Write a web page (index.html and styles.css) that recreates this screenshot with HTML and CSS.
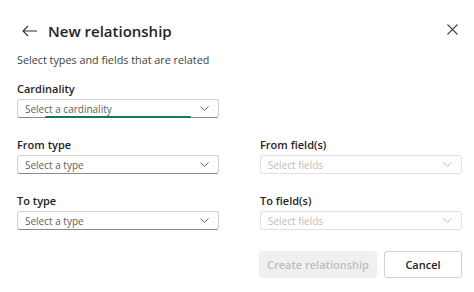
FILE: index.html
```html
<!DOCTYPE html>
<html lang="en">
<head>
    <meta charset="UTF-8">
    <title>New relationship</title>
    <link rel="stylesheet" href="styles.css">
</head>
<body>
    <div class="panel">
        <div class="header">
            <button class="icon-btn back" aria-label="Back">
                <svg width="16" height="12" viewBox="0 0 16 12"><path d="M6 1 L1 6 L6 11 M1 6 H15" fill="none" stroke="#333" stroke-width="1.1"/></svg>
            </button>
            <h1>New relationship</h1>
            <button class="icon-btn close" aria-label="Close">
                <svg width="11" height="11" viewBox="0 0 11 11"><path d="M0.5 0.5 L10.5 10.5 M10.5 0.5 L0.5 10.5" fill="none" stroke="#444" stroke-width="1.1"/></svg>
            </button>
        </div>
        <p class="subtitle">Select types and fields that are related</p>

        <div class="field cardinality">
            <label>Cardinality</label>
            <div class="dropdown focused">
                <span>Select a cardinality</span>
                <svg class="chev" width="9" height="5" viewBox="0 0 9 5"><path d="M0.5 0.5 L4.5 4.5 L8.5 0.5" fill="none" stroke="#666"/></svg>
            </div>
        </div>

        <div class="grid">
            <div class="field">
                <label>From type</label>
                <div class="dropdown">
                    <span>Select a type</span>
                    <svg class="chev" width="9" height="5" viewBox="0 0 9 5"><path d="M0.5 0.5 L4.5 4.5 L8.5 0.5" fill="none" stroke="#666"/></svg>
                </div>
            </div>
            <div class="field">
                <label>From field(s)</label>
                <div class="dropdown disabled">
                    <span>Select fields</span>
                    <svg class="chev" width="9" height="5" viewBox="0 0 9 5"><path d="M0.5 0.5 L4.5 4.5 L8.5 0.5" fill="none" stroke="#bbb"/></svg>
                </div>
            </div>
            <div class="field">
                <label>To type</label>
                <div class="dropdown">
                    <span>Select a type</span>
                    <svg class="chev" width="9" height="5" viewBox="0 0 9 5"><path d="M0.5 0.5 L4.5 4.5 L8.5 0.5" fill="none" stroke="#666"/></svg>
                </div>
            </div>
            <div class="field">
                <label>To field(s)</label>
                <div class="dropdown disabled">
                    <span>Select fields</span>
                    <svg class="chev" width="9" height="5" viewBox="0 0 9 5"><path d="M0.5 0.5 L4.5 4.5 L8.5 0.5" fill="none" stroke="#bbb"/></svg>
                </div>
            </div>
        </div>

        <div class="actions">
            <button class="btn primary" disabled>Create relationship</button>
            <button class="btn">Cancel</button>
        </div>
    </div>
</body>
</html>
```

FILE: styles.css
```css
body {
    margin: 0;
    background: #fff;
    font-family: "Open Sans", "Noto Sans", sans-serif;
    color: #242424;
}
.panel {
    width: 474px;
    height: 292px;
    padding: 0 12px 0 17px;
    box-sizing: border-box;
}
.header {
    display: flex;
    align-items: center;
    height: 30px;
    padding-top: 16px;
}
.icon-btn {
    background: none;
    border: none;
    padding: 0;
    display: flex;
    cursor: pointer;
}
.back {
    margin-left: 5px;
    margin-right: 10px;
}
.close {
    margin-left: auto;
    margin-right: 4px;
    margin-top: -3px;
}
h1 {
    margin: 0;
    font-size: 15px;
    font-weight: 600;
}
.subtitle {
    margin: 6px 0 0;
    font-size: 10.8px;
    line-height: 15px;
    color: #424242;
}
.field label {
    display: block;
    font-size: 11px;
    line-height: 15px;
    font-weight: 600;
    margin-bottom: 3px;
}
.cardinality {
    margin-top: 14px;
    width: 202px;
}
.dropdown {
    position: relative;
    height: 17px;
    border: 1px solid #d1d1d1;
    border-bottom-color: #8a8a8a;
    border-radius: 3px;
    display: flex;
    align-items: center;
    justify-content: space-between;
    padding: 0 9px 0 7px;
    font-size: 10px;
    color: #616161;
}
.dropdown.focused::after {
    content: "";
    position: absolute;
    left: 27px;
    right: 27px;
    bottom: -1px;
    height: 2px;
    background: #0f7b5a;
    border-radius: 1px;
}
.dropdown.disabled {
    border-color: #e0e0e0;
    color: #bdbdbd;
}
.grid {
    display: grid;
    grid-template-columns: 202px 202px;
    column-gap: 41px;
    row-gap: 19px;
    margin-top: 19px;
}
.actions {
    display: flex;
    justify-content: flex-end;
    gap: 7px;
    margin-top: 21px;
}
.btn {
    height: 27px;
    font-family: inherit;
    font-size: 11px;
    font-weight: 600;
    white-space: nowrap;
    border: 1px solid #d1d1d1;
    border-radius: 3px;
    background: #fff;
    color: #242424;
    width: 78px;
}
.btn.primary {
    width: 118px;
    background: #f0f0f0;
    border-color: #f0f0f0;
    color: #bdbdbd;
}
```
